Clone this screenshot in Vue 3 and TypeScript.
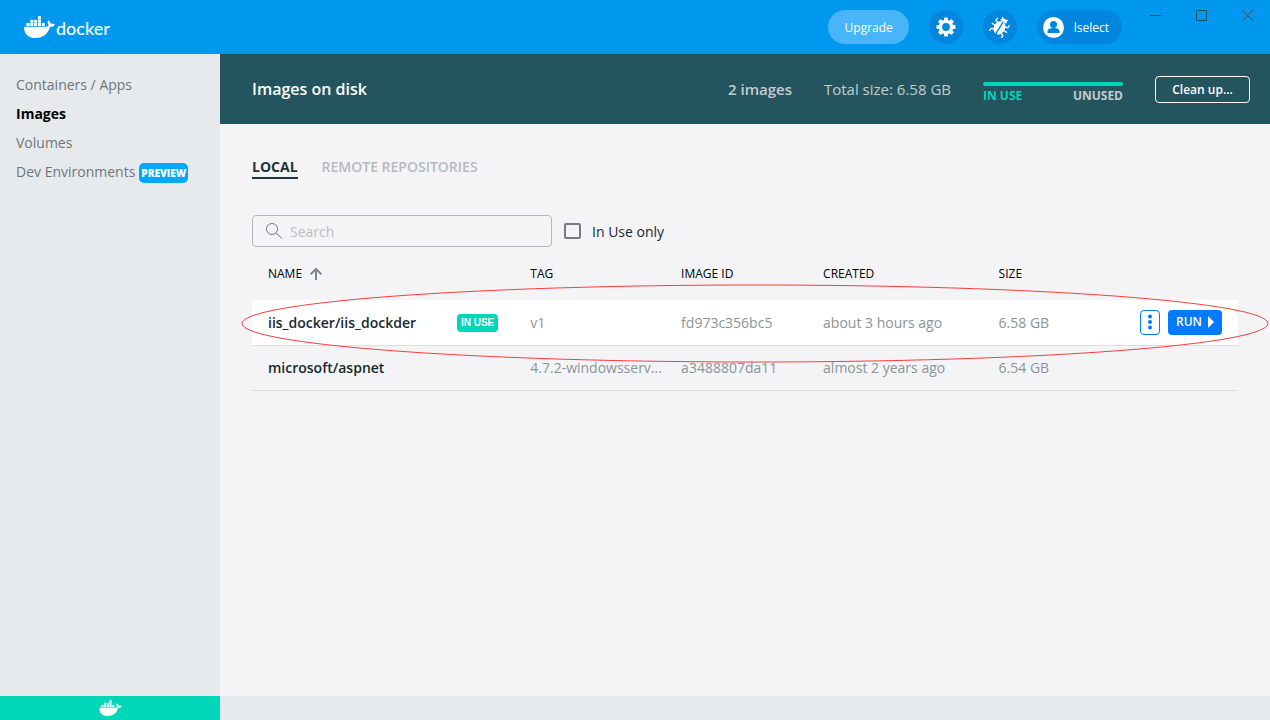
<script setup lang="ts">
import { computed, ref } from 'vue'

interface DockerImage {
  name: string
  tag: string
  id: string
  created: string
  size: string
  inUse: boolean
}

const navItems = [
  { label: 'Containers / Apps', preview: false },
  { label: 'Images', preview: false },
  { label: 'Volumes', preview: false },
  { label: 'Dev Environments', preview: true },
]
const activeNav = ref('Images')

const tabs = ['LOCAL', 'REMOTE REPOSITORIES']
const activeTab = ref('LOCAL')

const search = ref('')
const inUseOnly = ref(false)

const images: DockerImage[] = [
  { name: 'iis_docker/iis_dockder', tag: 'v1', id: 'fd973c356bc5', created: 'about 3 hours ago', size: '6.58 GB', inUse: true },
  { name: 'microsoft/aspnet', tag: '4.7.2-windowsserv...', id: 'a3488807da11', created: 'almost 2 years ago', size: '6.54 GB', inUse: false },
]

const visibleImages = computed(() =>
  images.filter((i) => i.name.includes(search.value) && (!inUseOnly.value || i.inUse)),
)
</script>

<template>
  <div class="app">
    <svg class="defs" width="0" height="0" aria-hidden="true">
      <symbol id="whale" viewBox="0 0 93 66">
        <path d="M42 1h9v9h-9zM19 11h9v9h-9zM30.500 11h9v9h-9zM42 11h9v9h-9zM7 21h10v9H7zM19 21h9v9h-9zM30.500 21h9v9h-9zM42 21h9v9h-9zM53.500 21h9v9h-9z" />
        <path d="M0 32h66c4 0 7-2 8-5c-4-5-4-10-1-14c4 3 6 6 7 10c4-1 9 0 13 3c-3 5-8 7-15 7c-6 20-20 33-44 33C12 66 0 53 0 32z" />
      </symbol>
    </svg>

    <header class="titlebar">
      <a class="brand" href="#" aria-label="docker home">
        <svg class="brand-whale" aria-hidden="true"><use href="#whale" /></svg>
        <span class="wordmark">docker</span>
      </a>
      <div class="account">
        <button class="pill upgrade" type="button">Upgrade</button>
        <button class="round" type="button" aria-label="Settings">
          <svg width="20" height="20" viewBox="0 0 20 20" aria-hidden="true">
            <g fill="#fff">
              <rect v-for="a in [0, 45, 90, 135]" :key="a" x="8" y="0.500" width="4" height="19" rx="0.800" :transform="`rotate(${a} 10 10)`" />
              <circle cx="10" cy="10" r="7.300" />
            </g>
            <circle cx="10" cy="10" r="3.900" fill="#0086dc" />
          </svg>
        </button>
        <button class="round" type="button" aria-label="Troubleshoot">
          <svg width="22" height="22" viewBox="0 0 22 22" aria-hidden="true">
            <g transform="rotate(32 11 11)">
              <ellipse cx="11" cy="12" rx="5.600" ry="7" fill="#fff" />
              <path d="M7.500 5a3.500 3.500 0 0 1 7 0z" fill="#fff" />
              <path d="M11 5.500V20" stroke="#0086dc" stroke-width="1.400" />
              <g fill="none" stroke="#fff" stroke-width="1.300">
                <path d="M9.500 3.500L8 1M12.500 3.500L14 1M7 8.500L4 7.500V4.500M6 12H2M7 15.500L4 17v3M15 8.500l3-1V4.500M16 12h4M15 15.500l3 1.500v3" />
              </g>
            </g>
          </svg>
        </button>
        <button class="pill user" type="button">
          <svg width="21" height="21" viewBox="0 0 21 21" aria-hidden="true">
            <circle cx="10.500" cy="10.500" r="10.500" fill="#fff" />
            <circle cx="10.500" cy="7.500" r="3.500" fill="#0086dc" />
            <path d="M4.500 16v-1.500c0-2.500 2.500-3.500 6-3.500s6 1 6 3.500V16z" fill="#0086dc" />
          </svg>
          <span>lselect</span>
        </button>
      </div>
      <div class="window-controls">
        <button type="button" aria-label="Minimize">
          <svg width="11" height="11" viewBox="0 0 11 11" aria-hidden="true"><path d="M0 5.500h11" /></svg>
        </button>
        <button type="button" aria-label="Maximize">
          <svg width="11" height="11" viewBox="0 0 11 11" aria-hidden="true"><path d="M.5 .5h10v10H.5z" /></svg>
        </button>
        <button type="button" aria-label="Close">
          <svg width="11" height="11" viewBox="0 0 11 11" aria-hidden="true"><path d="M0 0l11 11M11 0L0 11" /></svg>
        </button>
      </div>
    </header>

    <div class="body">
      <aside class="sidebar">
        <nav class="nav">
          <a
            v-for="item in navItems"
            :key="item.label"
            href="#"
            :class="{ active: item.label === activeNav }"
            @click.prevent="activeNav = item.label"
          >
            <span>{{ item.label }}</span>
            <span v-if="item.preview" class="preview">PREVIEW</span>
          </a>
        </nav>
        <div class="engine"><svg class="engine-whale" aria-hidden="true"><use href="#whale" /></svg></div>
      </aside>

      <main class="main">
        <section class="summary">
          <h1>Images on disk</h1>
          <span class="count">2 images</span>
          <span class="total">Total size: 6.58 GB</span>
          <div class="usage">
            <div class="usage-bar"></div>
            <div class="usage-labels"><span class="used">IN USE</span><span>UNUSED</span></div>
          </div>
          <button class="cleanup" type="button">Clean up...</button>
        </section>

        <section class="content">
          <div class="tabs" role="tablist">
            <button
              v-for="tab in tabs"
              :key="tab"
              type="button"
              role="tab"
              :aria-selected="tab === activeTab"
              :class="{ active: tab === activeTab }"
              @click="activeTab = tab"
            >{{ tab }}</button>
          </div>

          <div class="filters">
            <div class="search">
              <svg width="18" height="18" viewBox="0 0 18 18" aria-hidden="true">
                <circle cx="7" cy="7" r="5.500" />
                <path d="M11 11l6 5.500" />
              </svg>
              <input v-model="search" type="text" placeholder="Search" aria-label="Search" />
            </div>
            <label class="check"><input v-model="inUseOnly" type="checkbox" /><span>In Use only</span></label>
          </div>

          <div class="table-wrap">
            <table>
              <colgroup>
                <col class="c-name" /><col class="c-tag" /><col class="c-id" /><col class="c-created" /><col />
              </colgroup>
              <thead>
                <tr>
                  <th>
                    <span class="sorted">NAME
                      <svg width="12" height="12" viewBox="0 0 12 12" aria-hidden="true"><path d="M6 12V1M.7 6.300L6 1l5.300 5.300" /></svg>
                    </span>
                  </th>
                  <th>TAG</th>
                  <th>IMAGE ID</th>
                  <th>CREATED</th>
                  <th>SIZE</th>
                </tr>
              </thead>
              <tbody>
                <tr v-for="(image, i) in visibleImages" :key="image.id" :class="{ selected: i === 0 }">
                  <td class="name">
                    <div class="split">
                      <span>{{ image.name }}</span>
                      <span v-if="image.inUse" class="badge">IN USE</span>
                    </div>
                  </td>
                  <td>{{ image.tag }}</td>
                  <td>{{ image.id }}</td>
                  <td>{{ image.created }}</td>
                  <td class="last">
                    <div class="split">
                      <span>{{ image.size }}</span>
                      <span v-if="i === 0" class="actions">
                        <button class="more" type="button" aria-label="More actions">
                          <svg width="4" height="16" viewBox="0 0 4 16" aria-hidden="true">
                            <circle cx="2" cy="2.500" r="2" /><circle cx="2" cy="8" r="2" /><circle cx="2" cy="13.500" r="2" />
                          </svg>
                        </button>
                        <button class="run" type="button">
                          RUN
                          <svg width="6" height="12" viewBox="0 0 6 12" aria-hidden="true"><path d="M0 0l6 6-6 6z" /></svg>
                        </button>
                      </span>
                    </div>
                  </td>
                </tr>
              </tbody>
            </table>
            <svg class="highlight" aria-hidden="true"><ellipse cx="50%" cy="50%" rx="50%" ry="50%" /></svg>
          </div>
        </section>

        <footer class="statusbar"></footer>
      </main>
    </div>
  </div>
</template>

<style>
body {
  margin: 0;
}
</style>

<style scoped>
.app {
  display: flex;
  flex-direction: column;
  min-height: 100vh;
  font-family: 'Open Sans', 'Noto Sans', sans-serif;
  font-size: 14px;
  line-height: 20px;
  color: #17292e;
  background: #f4f4f6;
}
.app * {
  box-sizing: border-box;
}
.defs {
  position: absolute;
}
button {
  font: inherit;
  border: 0;
  padding: 0;
  background: none;
  cursor: pointer;
}
a {
  text-decoration: none;
}

.titlebar {
  display: flex;
  align-items: center;
  height: 54px;
  padding-left: 24px;
  background: #0098ee;
}
.brand {
  display: flex;
  align-items: center;
  gap: 1px;
  margin-right: auto;
  color: #fff;
}
.brand-whale {
  width: 31px;
  height: 22px;
  fill: #fff;
}
.wordmark {
  font-family: Lato, sans-serif;
  font-size: 18px;
  font-weight: 500;
  line-height: 22px;
  padding-top: 2px;
}
.account {
  display: flex;
  gap: 20px;
  margin-right: 10px;
}
.pill,
.round {
  display: flex;
  align-items: center;
  justify-content: center;
  height: 34px;
  border-radius: 17px;
  background: #0086dc;
  color: #fff;
  font-size: 12px;
}
.round {
  width: 34px;
}
.upgrade {
  width: 81px;
  padding: 2px 0 0 1px;
  background: #48b5f8;
}
.user {
  gap: 10px;
  padding: 0 13px 0 6px;
}
.user span {
  padding-top: 2px;
}
.window-controls {
  display: flex;
  align-self: flex-start;
}
.window-controls button {
  display: flex;
  align-items: center;
  justify-content: center;
  width: 46px;
  height: 31px;
  padding-left: 1px;
}
.window-controls svg {
  fill: none;
  stroke: #15506f;
}

.body {
  display: flex;
  flex: 1;
}
.sidebar {
  display: flex;
  flex-direction: column;
  justify-content: space-between;
  flex: none;
  width: 220px;
  background: #e6eaed;
}
.nav {
  display: flex;
  flex-direction: column;
  gap: 9px;
  padding: 21px 16px;
}
.nav a {
  display: flex;
  gap: 4px;
  color: #6f7679;
}
.nav a.active {
  color: #000;
  font-weight: 700;
}
.preview {
  height: 20px;
  margin-top: 1px;
  padding: 0 2px;
  border-radius: 5px;
  background: #00a8ff;
  color: #fff;
  font-size: 10px;
  font-weight: 800;
}
.engine {
  display: flex;
  align-items: center;
  justify-content: center;
  height: 24px;
  background: #00d6b8;
}
.engine-whale {
  width: 23px;
  height: 16px;
  fill: #fff;
}

.main {
  display: flex;
  flex-direction: column;
  flex: 1;
  min-width: 0;
}
.summary {
  display: flex;
  align-items: center;
  gap: 32px;
  height: 70px;
  padding: 0 20px 0 32px;
  background: #24555f;
  color: #c4cccf;
  font-size: 15px;
}
h1 {
  margin: 0 auto 0 0;
  color: #fff;
  font-size: 16px;
  font-weight: 600;
}
.count {
  font-weight: 600;
}
.usage {
  width: 140px;
  padding-top: 10px;
}
.usage-bar {
  height: 4px;
  border-radius: 2px;
  background: #00d6b8;
}
.usage-labels {
  display: flex;
  justify-content: space-between;
  font-size: 12px;
  font-weight: 700;
}
.used {
  color: #00d6b8;
}
.cleanup {
  width: 95px;
  height: 27px;
  padding-top: 1px;
  border: 1px solid #fff;
  border-radius: 4px;
  color: #fff;
  font-size: 12px;
  font-weight: 600;
}

.content {
  flex: 1;
  padding: 33px 32px;
}
.tabs {
  display: flex;
  gap: 24px;
}
.tabs button {
  height: 22px;
  border-bottom: 2px solid transparent;
  color: #b4bbbf;
  font-weight: 600;
}
.tabs button.active {
  border-color: #22343a;
  color: #22343a;
  font-weight: 700;
}
.filters {
  display: flex;
  align-items: center;
  gap: 12px;
  margin-top: 36px;
}
.search {
  display: flex;
  align-items: center;
  gap: 7px;
  width: 300px;
  height: 32px;
  padding: 0 12px;
  border: 1px solid #b5b9bc;
  border-radius: 4px;
}
.search svg {
  fill: none;
  stroke: #6c7a80;
}
.search input {
  flex: 1;
  min-width: 0;
  padding: 2px 0 0;
  border: 0;
  outline: 0;
  background: none;
  font: inherit;
  color: inherit;
}
.search input::placeholder {
  color: #b9bfc3;
}
.check {
  display: flex;
  align-items: center;
  gap: 11px;
}
.check span {
  padding-top: 2px;
}
.check input {
  appearance: none;
  width: 17px;
  height: 16px;
  margin: 0;
  border: 2px solid #707d83;
  border-radius: 2px;
}
.check input:checked {
  background: #007bff;
}

.table-wrap {
  position: relative;
}
table {
  width: 100%;
  table-layout: fixed;
  border-collapse: collapse;
}
.c-name {
  width: 26.6%;
}
.c-tag {
  width: 15.3%;
}
.c-id {
  width: 14.4%;
}
.c-created {
  width: 17.8%;
}
th {
  height: 53px;
  padding: 0 0 0 16px;
  font-size: 12px;
  font-weight: 400;
  text-align: left;
  color: #000;
}
.sorted {
  display: flex;
  align-items: center;
  gap: 8px;
}
.sorted svg {
  fill: none;
  stroke: #7b878c;
  stroke-width: 2;
}
td {
  height: 45px;
  padding: 0 0 0 16px;
  border-bottom: 1px solid #dcdee0;
  color: #8a9498;
  white-space: nowrap;
}
.selected {
  background: #fff;
}
.selected td {
  padding-top: 2px;
}
.name,
.last {
  padding-right: 16px;
}
.name {
  color: #17292e;
  font-weight: 600;
}
.split {
  display: flex;
  align-items: center;
  justify-content: space-between;
}
.badge {
  height: 18px;
  padding: 0 4px;
  border-radius: 4px;
  background: #00d6b8;
  color: #fff;
  font-family: 'Liberation Sans', Arial, sans-serif;
  font-size: 10px;
  font-weight: 700;
  line-height: 18px;
}
.actions {
  display: flex;
  gap: 8px;
  margin-bottom: 2px;
}
.more,
.run {
  display: flex;
  align-items: center;
  justify-content: center;
  height: 25px;
  border-radius: 4px;
}
.more {
  width: 20px;
  border: 1px solid #007bff;
  background: #fff;
}
.more svg {
  fill: #007bff;
}
.run {
  gap: 6px;
  padding: 0 8px;
  background: #007bff;
  color: #fff;
  font-size: 12px;
  font-weight: 600;
}
.run svg {
  fill: #fff;
}
/* Ellipse drawn around the first row, reaching past the table's edges. */
.highlight {
  position: absolute;
  top: 38px;
  left: -10px;
  width: calc(100% + 40px);
  height: 77px;
  overflow: visible;
  pointer-events: none;
  fill: none;
  stroke: #fa3c3c;
  stroke-width: 1;
}
.statusbar {
  height: 24px;
  background: #e6eaed;
}
</style>
